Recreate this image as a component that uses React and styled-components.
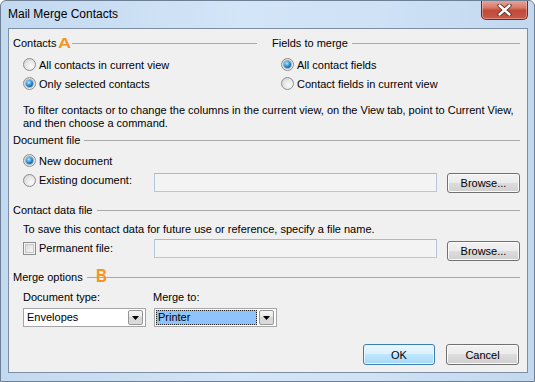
import React from 'react';
import styled, { createGlobalStyle } from 'styled-components';

const GlobalStyle = createGlobalStyle`
  html, body {
    margin: 0;
    padding: 0;
    background: #ffffff;
  }
  body {
    font-family: "Liberation Sans", Arial, sans-serif;
    font-size: 11px;
    color: #000;
  }
`;

const Window = styled.div`
  width: 535px;
  height: 382px;
  box-sizing: border-box;
  display: flex;
  flex-direction: column;
  padding: 0 6px 8px 7px;
  border: 1px solid #6d8096;
  border-radius: 6px 6px 0 0;
  background: linear-gradient(to right, #c3d9f0 0%, #d3e5f7 45%, #cfe2f6 70%, #c2d8ef 100%);
  overflow: hidden;
`;

const TitleBar = styled.div`
  height: 27px;
  display: flex;
  justify-content: space-between;
  align-items: flex-start;
`;

const Title = styled.div`
  font-size: 12px;
  line-height: 16px;
  padding-top: 5px;
  color: #000;
`;

const CloseButton = styled.div`
  width: 47px;
  height: 20px;
  margin-top: -1px;
  box-sizing: border-box;
  border: 1px solid #6b2a22;
  border-top: none;
  border-radius: 0 0 5px 5px;
  background: linear-gradient(#e9a99c 0%, #d97a69 40%, #c24a38 55%, #c6594a 100%);
  box-shadow: inset 0 0 0 1px rgba(255, 210, 200, 0.45);
  display: flex;
  align-items: center;
  justify-content: center;
`;

const Client = styled.div`
  flex: 1;
  box-sizing: border-box;
  border: 1px solid #7f8fa3;
  background: #f0f0f0;
  padding: 7px 7px 7px 4px;
  display: flex;
  flex-direction: column;
`;

const TopGrid = styled.div`
  display: grid;
  grid-template-columns: 244px 1fr;
  column-gap: 15px;
`;

const Column = styled.div`
  display: flex;
  flex-direction: column;
`;

const SectionHeader = styled.div`
  position: relative;
  height: 14px;
  display: flex;
  align-items: center;
  margin-top: ${p => p.$top || 0}px;
  white-space: nowrap;
`;

const HeaderLine = styled.div`
  flex: 1;
  height: 1px;
  margin-left: ${p => (p.$gap === undefined ? 4 : p.$gap)}px;
  background: #a9a9a9;
`;

const MarkA = styled.span`
  display: inline-block;
  width: 14px;
  margin-left: 2px;
  font-size: 14px;
  line-height: 14px;
  font-weight: bold;
  color: #f7941d;
  transform: scaleX(1.3);
  transform-origin: left center;
`;

const MarkB = styled.span`
  position: absolute;
  left: 83px;
  top: -4px;
  font-size: 19px;
  line-height: 19px;
  font-weight: bold;
  color: #f7941d;
  transform: scaleX(0.8);
  transform-origin: left center;
`;

const OptionRow = styled.label`
  height: 19px;
  display: flex;
  align-items: center;
  padding-left: ${p => p.$indent || 10}px;
  margin-top: ${p => p.$top || 0}px;
  white-space: nowrap;
`;

const Radio = styled.span`
  width: 13px;
  height: 13px;
  flex: none;
  box-sizing: border-box;
  border-radius: 50%;
  border: 1px solid #8c8e8e;
  margin-right: 3px;
  background: radial-gradient(circle at 65% 65%, #fafafa 0%, #e6e6e6 50%, #cdcdcd 100%);
  display: flex;
  align-items: center;
  justify-content: center;

  &::after {
    content: '';
    display: ${p => (p.$checked ? 'block' : 'none')};
    width: 7px;
    height: 7px;
    border-radius: 50%;
    background: radial-gradient(circle at 40% 35%, #bfeaff 0%, #45a8ea 35%, #14609f 70%, #0c3866 100%);
    box-shadow: 0 0 0 1px #9cb3ca;
  }
`;

const Checkbox = styled.span`
  width: 13px;
  height: 13px;
  flex: none;
  box-sizing: border-box;
  border: 1px solid #8c8e8e;
  margin-right: 3px;
  background: linear-gradient(135deg, #d2d2d2 0%, #f2f2f2 70%, #ffffff 100%);
  box-shadow: inset 0 0 0 1px #f4f4f4, inset 0 0 0 2px #c6c6c6;
`;

const Description = styled.div`
  padding-left: 10px;
  margin-top: ${p => p.$top || 0}px;
  line-height: ${p => p.$lineHeight || 13}px;
  white-space: nowrap;
`;

const FileRow = styled.div`
  display: flex;
  align-items: flex-start;
  padding-left: 10px;
  margin-top: ${p => p.$top || 0}px;
`;

const FileLabel = styled.label`
  width: 131px;
  flex: none;
  height: 16px;
  margin-top: ${p => p.$labelTop || 0}px;
  display: flex;
  align-items: center;
  white-space: nowrap;
`;

const TextBox = styled.div`
  flex: 1;
  height: 19px;
  margin-top: ${p => p.$top || 0}px;
  box-sizing: border-box;
  border: 1px solid #b5c7da;
  border-top-color: #a7b9cd;
  background: #f3f3f3;
`;

const Button = styled.button`
  width: ${p => p.$width || 73}px;
  height: ${p => p.$height || 21}px;
  flex: none;
  margin: ${p => p.$top || 0}px 0 0 ${p => p.$left || 0}px;
  padding: 0;
  box-sizing: border-box;
  font-family: inherit;
  font-size: 11px;
  color: #000;
  border-radius: 3px;
  border: 1px solid ${p => (p.$primary ? '#3c7fb1' : '#707070')};
  background: ${p =>
    p.$primary
      ? 'linear-gradient(#eaf6fd 0%, #d9f0fc 50%, #bee6fd 50%, #a7d9f5 100%)'
      : 'linear-gradient(#f2f2f2 0%, #ebebeb 50%, #dddddd 50%, #cfcfcf 100%)'};
  box-shadow: inset 0 0 0 1px ${p => (p.$primary ? '#e4f5fc' : '#fbfbfb')};
`;

const MergeGrid = styled.div`
  display: grid;
  grid-template-columns: 123px 123px;
  column-gap: 8px;
  padding-left: 10px;
  margin-top: ${p => p.$top || 0}px;
`;

const FieldLabel = styled.div`
  line-height: 14px;
  white-space: nowrap;
  margin-left: ${p => p.$shift || 0}px;
`;

const Combo = styled.div`
  height: 19px;
  box-sizing: border-box;
  border: 1px solid #a5a5a5;
  background: #fff;
  padding: 1px 2px 1px 1px;
  display: flex;
  gap: 2px;
`;

const ComboValue = styled.div`
  flex: 1;
  display: flex;
  align-items: center;
  padding-left: 2px;
  line-height: 13px;
  background: ${p => (p.$selected ? '#8ec4fb' : 'transparent')};
  outline: ${p => (p.$selected ? '1px dotted #222' : 'none')};
  outline-offset: -1px;
`;

const ComboArrow = styled.div`
  width: 15px;
  flex: none;
  box-sizing: border-box;
  border: 1px solid #979797;
  border-radius: 2px;
  background: linear-gradient(#f5f5f5 0%, #e8e8e8 50%, #d6d6d6 50%, #dcdcdc 100%);
  display: flex;
  align-items: center;
  justify-content: center;
`;

const ButtonRow = styled.div`
  display: flex;
  justify-content: flex-end;
  gap: 11px;
  margin-top: auto;
  padding-right: 1px;
`;

const CloseGlyph = () => (
  <svg width="15" height="12" viewBox="0 0 15 12">
    <path d="M2.5 1.5 L12.5 10.5 M12.5 1.5 L2.5 10.5" stroke="#5b2a22" strokeWidth="4.2" strokeLinecap="round" />
    <path d="M2.5 1.5 L12.5 10.5 M12.5 1.5 L2.5 10.5" stroke="#ffffff" strokeWidth="2.4" strokeLinecap="round" />
  </svg>
);

const ArrowGlyph = () => (
  <svg width="7" height="4" viewBox="0 0 7 4">
    <polygon points="0,0 7,0 3.5,4" fill="#000" />
  </svg>
);

const ComboBox = ({ value, selected }) => (
  <Combo>
    <ComboValue $selected={selected}>{value}</ComboValue>
    <ComboArrow>
      <ArrowGlyph />
    </ComboArrow>
  </Combo>
);

const App = () => (
  <>
    <GlobalStyle />
    <Window>
      <TitleBar>
        <Title>Mail Merge Contacts</Title>
        <CloseButton>
          <CloseGlyph />
        </CloseButton>
      </TitleBar>
      <Client>
        <TopGrid>
          <Column>
            <SectionHeader>
              Contacts
              <MarkA>A</MarkA>
              <HeaderLine $gap={0} />
            </SectionHeader>
            <OptionRow $top={5}>
              <Radio />
              All contacts in current view
            </OptionRow>
            <OptionRow>
              <Radio $checked />
              Only selected contacts
            </OptionRow>
          </Column>
          <Column>
            <SectionHeader>
              Fields to merge
              <HeaderLine />
            </SectionHeader>
            <OptionRow $top={5} $indent={9}>
              <Radio $checked />
              All contact fields
            </OptionRow>
            <OptionRow $indent={9}>
              <Radio />
              Contact fields in current view
            </OptionRow>
          </Column>
        </TopGrid>

        <Description $top={11}>
          To filter contacts or to change the columns in the current view, on the View tab, point to Current View,
          <br />
          and then choose a command.
        </Description>

        <SectionHeader $top={3}>
          Document file
          <HeaderLine />
        </SectionHeader>
        <OptionRow $top={4}>
          <Radio $checked />
          New document
        </OptionRow>
        <FileRow $top={2}>
          <FileLabel>
            <Radio />
            Existing document:
          </FileLabel>
          <TextBox $top={1} />
          <Button $left={10} $top={1} $height={20}>
            Browse...
          </Button>
        </FileRow>

        <SectionHeader $top={10}>
          Contact data file
          <HeaderLine />
        </SectionHeader>
        <Description $top={5} $lineHeight={15}>
          To save this contact data for future use or reference, specify a file name.
        </Description>
        <FileRow $top={2}>
          <FileLabel $labelTop={1}>
            <Checkbox />
            Permanent file:
          </FileLabel>
          <TextBox />
          <Button $left={10} $top={2} $height={20}>
            Browse...
          </Button>
        </FileRow>

        <SectionHeader $top={9}>
          Merge options
          <HeaderLine />
          <MarkB>B</MarkB>
        </SectionHeader>
        <MergeGrid $top={6}>
          <FieldLabel>Document type:</FieldLabel>
          <FieldLabel $shift={-1}>Merge to:</FieldLabel>
        </MergeGrid>
        <MergeGrid $top={4}>
          <ComboBox value="Envelopes" />
          <ComboBox value="Printer" selected />
        </MergeGrid>

        <ButtonRow>
          <Button $primary $width={72}>
            OK
          </Button>
          <Button $width={73}>Cancel</Button>
        </ButtonRow>
      </Client>
    </Window>
  </>
);

export default App;
